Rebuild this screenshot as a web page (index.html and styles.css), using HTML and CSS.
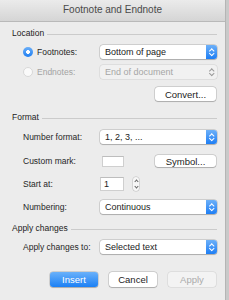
FILE: index.html
```html
<!DOCTYPE html>
<html lang="en">
<head>
    <meta charset="UTF-8">
    <title>Footnote and Endnote</title>
    <link rel="stylesheet" href="styles.css">
</head>
<body>
    <div id="window">
        <div id="titlebar">Footnote and Endnote</div>
        <div id="content">
            <div class="group-title first"><span>Location</span><i></i></div>

            <div class="row r-foot">
                <label class="radio-label"><span class="radio on"></span>Footnotes:</label>
                <div class="select"><span>Bottom of page</span><b class="arrows"></b></div>
            </div>
            <div class="row r-end">
                <label class="radio-label disabled"><span class="radio"></span>Endnotes:</label>
                <div class="select disabled"><span>End of document</span><b class="arrows"></b></div>
            </div>
            <div class="row r-convert">
                <span></span>
                <div class="right"><button class="btn wide">Convert...</button></div>
            </div>

            <div class="group-title g-format"><span>Format</span><i></i></div>

            <div class="row r-numfmt">
                <label class="lbl">Number format:</label>
                <div class="select"><span>1, 2, 3, ...</span><b class="arrows"></b></div>
            </div>
            <div class="row r-custom">
                <label class="lbl">Custom mark:</label>
                <div class="split">
                    <div class="field"></div>
                    <button class="btn wide">Symbol...</button>
                </div>
            </div>
            <div class="row r-start">
                <label class="lbl">Start at:</label>
                <div class="split start">
                    <div class="field">1</div>
                    <div class="stepper"></div>
                </div>
            </div>
            <div class="row r-numbering">
                <label class="lbl">Numbering:</label>
                <div class="select"><span>Continuous</span><b class="arrows"></b></div>
            </div>

            <div class="group-title g-apply"><span>Apply changes</span><i></i></div>

            <div class="row r-applyto">
                <label class="lbl">Apply changes to:</label>
                <div class="select"><span>Selected text</span><b class="arrows"></b></div>
            </div>

            <div class="buttons">
                <button class="btn primary">Insert</button>
                <button class="btn">Cancel</button>
                <button class="btn off">Apply</button>
            </div>
        </div>
    </div>
</body>
</html>
```

FILE: styles.css
```css
html, body {
    margin: 0;
    padding: 0;
}
body {
    width: 229px;
    height: 300px;
    background: #c9c9c9;
    font-family: "Liberation Sans", Arial, sans-serif;
    color: #222;
    overflow: hidden;
}
#window {
    width: 225px;
    height: 300px;
    background: #ececec;
    border-right: 1px solid #b5b5b5;
}
#titlebar {
    height: 21px;
    line-height: 20px;
    text-align: center;
    font-size: 10px;
    color: #4a4a4a;
    background: linear-gradient(#ebebeb, #d5d5d5);
    border-bottom: 1px solid #b9b9b9;
}
#content {
    padding: 5px 8px 0 12px;
}
.group-title {
    display: flex;
    align-items: center;
    height: 12px;
    font-size: 8.5px;
}
.group-title i {
    flex: 1;
    margin-left: 3px;
    margin-top: 2px;
    border-top: 1px solid #cbcbcb;
}
.g-format { margin-top: 10px; }
.g-apply { margin-top: 7px; }

.row {
    display: grid;
    grid-template-columns: 77px 117px;
    align-items: center;
    height: 16px;
    padding-left: 11px;
    font-size: 8.5px;
}
.r-foot { margin-top: 5px; }
.r-end { margin-top: 4px; }
.r-convert { margin-top: 7px; height: 14px; }
.r-numfmt { margin-top: 6px; }
.r-custom { margin-top: 8px; }
.r-start { margin-top: 7px; }
.r-numbering { margin-top: 7px; }
.r-applyto { margin-top: 5px; }

.lbl, .radio-label {
    display: flex;
    align-items: center;
    color: #262626;
}
.radio-label.disabled {
    color: #a3a3a3;
}
.radio {
    width: 10px;
    height: 10px;
    border-radius: 50%;
    margin-right: 4px;
    box-sizing: border-box;
    background: #fafafa;
    border: 1px solid #d8d8d8;
}
.radio.on {
    border: none;
    background: radial-gradient(circle, #fff 0 1.6px, transparent 2.2px), linear-gradient(#6aaef8, #1f7ff2);
}

.select {
    position: relative;
    height: 14px;
    background: #fff;
    border-radius: 3px;
    box-shadow: 0 0 0 0.5px rgba(0, 0, 0, .22), 0 0.5px 1px rgba(0, 0, 0, .18);
    font-size: 9px;
    line-height: 14px;
    padding-left: 5px;
}
.arrows {
    position: absolute;
    top: 0;
    right: 0;
    width: 11px;
    height: 14px;
    border-radius: 0 3px 3px 0;
    background: linear-gradient(#6db0f8, #1d7ef5);
}
.arrows::before, .arrows::after {
    content: "";
    position: absolute;
    left: 4px;
    width: 2.5px;
    height: 2.5px;
    border-left: 1px solid #fff;
    border-top: 1px solid #fff;
}
.arrows::before {
    top: 4px;
    transform: rotate(45deg);
}
.arrows::after {
    top: 7px;
    transform: rotate(225deg);
}
.select.disabled {
    background: #f1f1f1;
    color: #a6a6a6;
    box-shadow: 0 0 0 0.5px rgba(0, 0, 0, .12);
}
.select.disabled .arrows {
    background: none;
}
.select.disabled .arrows::before, .select.disabled .arrows::after {
    border-color: #9a9a9a;
}

.right {
    display: flex;
    justify-content: flex-end;
    padding-right: 1px;
}
.split {
    display: flex;
    align-items: center;
    justify-content: space-between;
    padding-right: 1px;
}
.split.start {
    justify-content: flex-start;
}
.field {
    width: 24px;
    height: 13px;
    box-sizing: border-box;
    background: #fff;
    border: 1px solid #cfcfcf;
    border-top-color: #bdbdbd;
    font-size: 9px;
    line-height: 11px;
    padding-left: 3px;
}
.r-start .field {
    height: 14px;
    line-height: 12px;
}
.r-custom .field {
    height: 11px;
    margin-left: 2px;
    width: 22px;
}
.stepper {
    position: relative;
    width: 6px;
    height: 14px;
    margin-left: 9px;
    background: #f7f7f7;
    border-radius: 3px;
    box-shadow: 0 0 0 0.5px rgba(0, 0, 0, .2);
}
.stepper::before, .stepper::after {
    content: "";
    position: absolute;
    left: 1.5px;
    width: 2px;
    height: 2px;
    border-left: 1px solid #666;
    border-top: 1px solid #666;
}
.stepper::before { top: 3px; transform: rotate(45deg); }
.stepper::after { top: 7.5px; transform: rotate(225deg); }

.btn {
    width: 48px;
    height: 15px;
    padding: 0;
    margin: 0;
    font-family: "Liberation Sans", Arial, sans-serif;
    font-size: 9.5px;
    color: #1c1c1c;
    background: #fff;
    border: none;
    border-radius: 3px;
    box-shadow: 0 0 0 0.5px rgba(0, 0, 0, .22), 0 0.5px 1px rgba(0, 0, 0, .18);
}
.btn.wide {
    width: 61px;
    height: 14px;
}
.r-custom .btn.wide {
    height: 12px;
}
.btn.primary {
    color: #fff;
    background: linear-gradient(#6ab1fa, #1b80f5);
}
.btn.off {
    color: #ababab;
    background: #f3f3f3;
    box-shadow: 0 0 0 0.5px rgba(0, 0, 0, .12);
}
.buttons {
    display: flex;
    justify-content: flex-end;
    gap: 11px;
    margin-top: 17px;
    padding-right: 1px;
}
```
